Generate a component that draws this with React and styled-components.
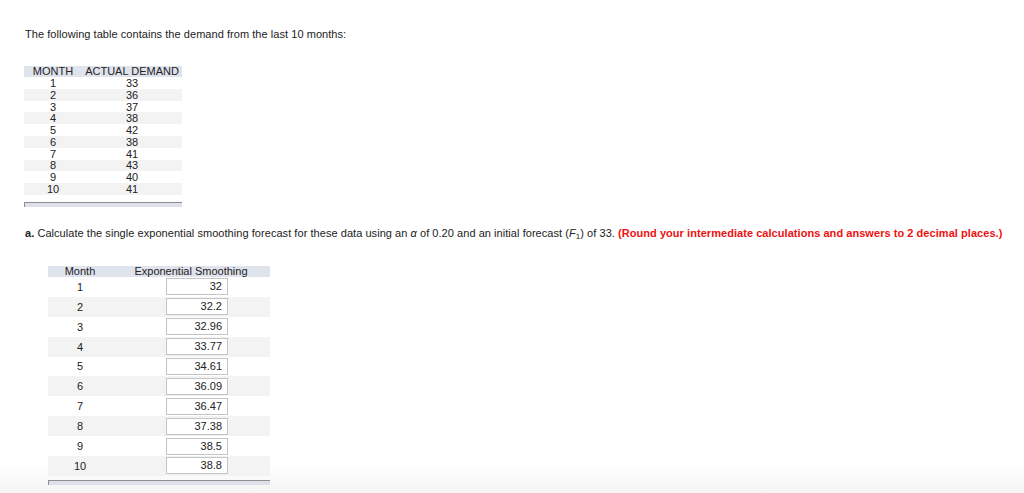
import React from 'react'
import styled, { createGlobalStyle } from 'styled-components'

const demand = [
    [1, 33], [2, 36], [3, 37], [4, 38], [5, 42],
    [6, 38], [7, 41], [8, 43], [9, 40], [10, 41],
]

const smoothing = ['32', '32.2', '32.96', '33.77', '34.61', '36.09', '36.47', '37.38', '38.5', '38.8']

const GlobalStyle = createGlobalStyle`
    html {
        background: linear-gradient(to bottom, #ffffff 0, #ffffff 465px, #f4f4f4 493px);
        min-height: 493px;
    }
    body {
        margin: 0;
        font-family: "Liberation Sans", Arial, sans-serif;
        font-size: 11px;
        color: #222;
    }
`

const Page = styled.div`
    padding: 28px 0 0 25px;
`

const Text = styled.p`
    margin: 0;
    line-height: 13px;
    white-space: nowrap;
    letter-spacing: 0.05px;
`

const Demand = styled.div`
    width: 158px;
    margin: 25px 0 0 -1px;
`

const Grid = styled.div`
    display: grid;
    grid-template-columns: ${(p) => p.$cols};
`

const Head = styled.div`
    background: #dfe3ec;
    color: #222;
    height: 11px;
    line-height: 11px;
    text-align: center;
    font-size: 11px;
`

const Cell = styled.div`
    height: ${(p) => p.$h};
    text-align: center;
    color: #222;
    background: ${(p) => (p.$shade ? '#f3f3f3' : '#ffffff')};
    display: flex;
    align-items: center;
    justify-content: ${(p) => (p.$left ? 'flex-start' : 'center')};
`

const Bar = styled.div`
    margin-top: ${(p) => p.$gap};
    height: 4px;
    background: #dde2ea;
    border-top: 1px solid #8e8e8e;
    border-left: 1px solid #8e8e8e;
`

const Question = styled(Text)`
    margin-top: 20px;
`

const Red = styled.span`
    color: #f01010;
    font-weight: bold;
`

const Sub = styled.sub`
    font-size: 8px;
    vertical-align: -2px;
    line-height: 0;
`

const Smoothing = styled.div`
    width: 222px;
    margin: 26px 0 0 23px;
`

const Field = styled.div`
    width: 55px;
    height: 15px;
    border: 1px solid #c4c4c4;
    background: #fff;
    text-align: right;
    padding-right: 5px;
    line-height: 15px;
    color: #222;
    margin-left: 54px;
`

const App = () => {
    return (
        <Page>
            <GlobalStyle />
            <Text>The following table contains the demand from the last 10 months:</Text>

            <Demand>
                <Grid $cols="58px 100px">
                    <Head>MONTH</Head>
                    <Head>ACTUAL DEMAND</Head>
                    {demand.map(([m, d], i) => (
                        <React.Fragment key={m}>
                            <Cell $h="11.8px" $shade={i % 2 === 1}>{m}</Cell>
                            <Cell $h="11.8px" $shade={i % 2 === 1}>{d}</Cell>
                        </React.Fragment>
                    ))}
                </Grid>
                <Bar $gap="7px" />
            </Demand>

            <Question>
                <b>a.</b> Calculate the single exponential smoothing forecast for these data using an <i>α</i> of 0.20 and an initial forecast (<i>F</i><Sub>1</Sub>) of 33. <Red>(Round your intermediate calculations and answers to 2 decimal places.)</Red>
            </Question>

            <Smoothing>
                <Grid $cols="64px 158px">
                    <Head>Month</Head>
                    <Head>Exponential Smoothing</Head>
                    {smoothing.map((v, i) => (
                        <React.Fragment key={i}>
                            <Cell $h="19.9px" $shade={i % 2 === 1}>{i + 1}</Cell>
                            <Cell $h="19.9px" $shade={i % 2 === 1} $left>
                                <Field>{v}</Field>
                            </Cell>
                        </React.Fragment>
                    ))}
                </Grid>
                <Bar $gap="4px" />
            </Smoothing>
        </Page>
    )
}

export default App
